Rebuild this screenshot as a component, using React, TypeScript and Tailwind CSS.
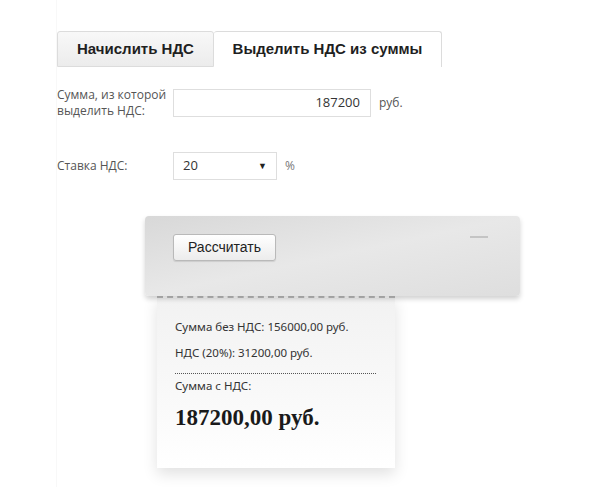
export default function App() {
  return (
    <div className="w-[600px] h-[487px] bg-white overflow-hidden">
      <div className="ml-[56px] h-full border-l border-[#f8f8f8] pt-[31px] font-['Open_Sans',sans-serif] text-[#444]">
        {/* Tabs */}
        <div className="flex h-[36px] font-['Liberation_Sans',Arial,sans-serif] text-[15px] font-bold text-[#1f1f1f]">
          <div className="flex w-[157px] items-center justify-center rounded-t-[3px] border border-[#dcdcdc] bg-gradient-to-b from-[#f8f8f8] to-[#ececec]">
            Начислить НДС
          </div>
          <div className="flex w-[228px] items-center justify-center rounded-t-[3px] border border-b-0 border-l-0 border-[#dcdcdc] bg-white">
            Выделить НДС из суммы
          </div>
        </div>

        {/* Sum */}
        <div className="mt-[20px] flex items-center">
          <div className="flex w-[116px] flex-col text-[12px] leading-[16px] text-[#555]">
            <span>Сумма, из которой</span>
            <span>выделить НДС:</span>
          </div>
          <div className="flex h-[28px] w-[198px] items-center justify-end border border-[#dedede] pr-[10px] text-[13px] text-[#333]">
            187200
          </div>
          <span className="ml-[8px] text-[12px] text-[#555]">руб.</span>
        </div>

        {/* Rate */}
        <div className="mt-[33px] flex items-center">
          <div className="w-[116px] text-[12px] text-[#555]">Ставка НДС:</div>
          <div className="flex h-[28px] w-[104px] items-center justify-between border border-[#dedede] pl-[9px] pr-[9px] text-[13px] text-[#333]">
            <span>20</span>
            <span className="text-[9px] text-[#222]">▼</span>
          </div>
          <span className="ml-[8px] text-[12px] text-[#777]">%</span>
        </div>

        {/* Calculator */}
        <div className="mt-[36px] ml-[88px] flex flex-col">
          <div className="relative z-10 h-[80px] w-[375px] rounded-[4px] bg-gradient-to-br from-[#d8d8d8] via-[#e8e8e8] to-[#dedede] pl-[28px] pt-[18px] shadow-[0_3px_5px_rgba(0,0,0,0.18)]">
            <button className="h-[27px] w-[103px] rounded-[3px] border border-[#b9b9b9] bg-gradient-to-b from-[#ffffff] to-[#ececec] font-['Liberation_Sans',Arial,sans-serif] text-[14px] text-[#222] shadow-[0_1px_1px_rgba(0,0,0,0.1)]">
              Рассчитать
            </button>
            <div className="absolute right-[32px] top-[20px] h-[2px] w-[18px] bg-[#c4c4c4]" />
          </div>
          <div className="ml-[12px] w-[238px] border-t-2 border-dashed border-[#bdbdbd] bg-gradient-to-b from-[#f2f2f2] via-[#f8f8f8] to-white px-[18px] pt-[21px] pb-[36px] font-['Noto_Sans',sans-serif] text-[11.5px] text-[#333] shadow-[0_6px_14px_rgba(0,0,0,0.12)]">
            <div className="leading-[16px]">Сумма без НДС: 156000,00 руб.</div>
            <div className="mt-[10px] leading-[16px]">НДС (20%): 31200,00 руб.</div>
            <div className="mt-[12px] w-[201px] border-t border-dotted border-[#555]" />
            <div className="mt-[4px] leading-[16px]">Сумма с НДС:</div>
            <div className="mt-[10px] font-['Liberation_Serif',serif] text-[23px] font-bold leading-[28px] text-[#1a1a1a]">
              187200,00 руб.
            </div>
          </div>
        </div>
      </div>
    </div>
  );
}
